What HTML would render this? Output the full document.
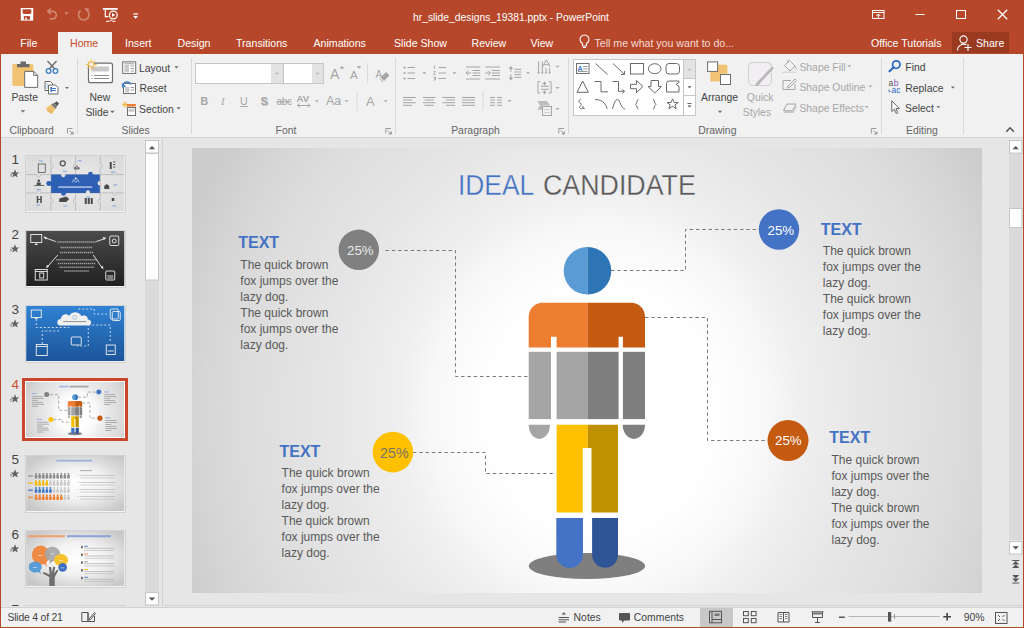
<!DOCTYPE html>
<html><head><meta charset="utf-8"><style>
*{margin:0;padding:0;box-sizing:border-box}
html,body{width:1024px;height:628px;overflow:hidden;background:#E6E6E6;font-family:"Liberation Sans",sans-serif}
.a{position:absolute}
.t{position:absolute;white-space:nowrap;line-height:1}
svg{position:absolute;overflow:visible}
</style></head><body>
<div class="a" style="left:0;top:0;width:1024px;height:54px;background:#B7472A"></div>
<div class="a" style="left:0;top:54px;width:1024px;height:83px;background:#F1F1F1"></div>
<div class="a" style="left:0;top:137px;width:1024px;height:1px;background:#D5D5D5"></div>
<div class="t" style="left:413.0px;top:12.9px;font-size:10.3px;color:#fff;">hr_slide_designs_19381.pptx - PowerPoint</div>
<svg style="left:0;top:0" width="1024" height="54">
<g fill="none" stroke="#fff" stroke-width="1">
<rect x="872.5" y="10.5" width="11.5" height="8"/><path d="M872.5 12.5H884M878.3 18.5V14M876.3 16L878.3 14L880.3 16"/>
<path d="M915.5 14.5H924.5"/>
<rect x="956.5" y="10.5" width="9" height="8"/>
<path d="M997.8 9.8L1007.2 19.2M1007.2 9.8L997.8 19.2" stroke-width="1.3"/>
</g>
<!-- QAT save -->
<rect x="20.8" y="8" width="12.4" height="12.6" fill="#fff"/>
<path d="M22.6 9.2H31.3V12.6A1.3 1.3 0 0 1 30 13.9H23.9A1.3 1.3 0 0 1 22.6 12.6Z" fill="#B7472A"/>
<rect x="23.8" y="16.1" width="6.2" height="3.5" fill="#B7472A"/><rect x="25.2" y="17.6" width="1.6" height="2" fill="#fff"/>
<g fill="none" stroke="#CF8570" stroke-width="1.7">
<path d="M48.5 11.3H52.5A3.8 3.8 0 0 1 52.5 18.9H49.5"/><path d="M50.8 8.6L47.8 11.3L50.8 14"/>
<path d="M85.8 9.8A5.3 5.3 0 1 1 80.5 10.5"/>
</g>
<path d="M84 8.2H88.6V12.8Z" fill="#CF8570"/>
<path d="M64.3 12.2H68.7L66.5 14.9Z" fill="#CF8570"/>
<g fill="none" stroke="#fff" stroke-width="1.2">
<path d="M105.3 9.8V16.7H108.5"/><circle cx="113.3" cy="15" r="3.9"/>
<path d="M106 21.3H109.5L111 19.8L112.5 21.3H115.5" stroke-width="1"/>
</g>
<rect x="102.9" y="8" width="14.7" height="1.8" fill="#fff"/>
<path d="M112 13V17L115.2 15Z" fill="#fff"/>
<rect x="133.2" y="13.4" width="4.8" height="1.2" fill="#fff"/>
<path d="M133.2 16H138L135.6 18.8Z" fill="#fff"/>
</svg>
<div class="a" style="left:58px;top:32px;width:54px;height:22px;background:#F1F1F1"></div>
<div class="t" style="left:20.3px;top:38.0px;font-size:10.6px;color:#fff;">File</div>
<div class="t" style="left:125.0px;top:38.0px;font-size:10.6px;color:#fff;">Insert</div>
<div class="t" style="left:177.5px;top:38.0px;font-size:10.6px;color:#fff;">Design</div>
<div class="t" style="left:236.0px;top:38.0px;font-size:10.6px;color:#fff;">Transitions</div>
<div class="t" style="left:313.5px;top:38.0px;font-size:10.6px;color:#fff;">Animations</div>
<div class="t" style="left:394.0px;top:38.0px;font-size:10.6px;color:#fff;">Slide Show</div>
<div class="t" style="left:471.5px;top:38.0px;font-size:10.6px;color:#fff;">Review</div>
<div class="t" style="left:530.5px;top:38.0px;font-size:10.6px;color:#fff;">View</div>
<div class="t" style="left:871.0px;top:38.0px;font-size:10.6px;color:#fff;">Office Tutorials</div>
<div class="t" style="left:70.0px;top:38.0px;font-size:10.6px;color:#C64A2A;">Home</div>
<div class="t" style="left:594.5px;top:38.0px;font-size:10.6px;color:#F4DCD5;">Tell me what you want to do...</div>
<div class="a" style="left:952px;top:32px;width:57px;height:21px;background:#9A3A21"></div>
<div class="t" style="left:976.0px;top:38.0px;font-size:10.6px;color:#fff;">Share</div>
<svg style="left:0;top:0" width="1024" height="54">
<g fill="none" stroke="#fff" stroke-width="1.1">
<path d="M582.5 43.5A4.5 4.5 0 1 1 586.5 43.5V46H582.5Z"/><path d="M583 47.5H586"/>
<circle cx="963.5" cy="39.5" r="3.6"/><path d="M957.5 50.5A6.2 6.2 0 0 1 966.5 44.8"/>
<path d="M968 44V51M964.5 47.5H971.5"/>
</g></svg>
<div class="t" style="left:9.4px;top:125.5px;font-size:10.4px;color:#666666;">Clipboard</div>
<div class="t" style="left:121.5px;top:125.5px;font-size:10.4px;color:#666666;">Slides</div>
<div class="t" style="left:275.6px;top:125.5px;font-size:10.4px;color:#666666;">Font</div>
<div class="t" style="left:451.2px;top:125.5px;font-size:10.4px;color:#666666;">Paragraph</div>
<div class="t" style="left:698.3px;top:125.5px;font-size:10.4px;color:#666666;">Drawing</div>
<div class="t" style="left:906.0px;top:125.5px;font-size:10.4px;color:#666666;">Editing</div>
<div class="t" style="left:11.4px;top:93.2px;font-size:10.4px;color:#444444;">Paste</div>
<div class="t" style="left:89.4px;top:93.2px;font-size:10.4px;color:#444444;">New</div>
<div class="t" style="left:85.4px;top:108.4px;font-size:10.4px;color:#444444;">Slide</div>
<div class="t" style="left:138.9px;top:63.6px;font-size:10.4px;color:#444444;">Layout</div>
<div class="t" style="left:139.5px;top:84.3px;font-size:10.4px;color:#444444;">Reset</div>
<div class="t" style="left:139.1px;top:105.1px;font-size:10.4px;color:#444444;">Section</div>
<div class="t" style="left:701.0px;top:93.2px;font-size:10.4px;color:#444444;">Arrange</div>
<div class="t" style="left:746.8px;top:93.2px;font-size:10.4px;color:#A8A8A8;">Quick</div>
<div class="t" style="left:742.8px;top:108.4px;font-size:10.4px;color:#A8A8A8;">Styles</div>
<div class="t" style="left:799.4px;top:62.9px;font-size:10.4px;color:#A8A8A8;">Shape Fill</div>
<div class="t" style="left:799.4px;top:83.0px;font-size:10.4px;color:#A8A8A8;">Shape Outline</div>
<div class="t" style="left:799.4px;top:103.7px;font-size:10.4px;color:#A8A8A8;">Shape Effects</div>
<div class="t" style="left:905.3px;top:62.8px;font-size:10.4px;color:#444444;">Find</div>
<div class="t" style="left:905.3px;top:83.5px;font-size:10.4px;color:#444444;">Replace</div>
<div class="t" style="left:905.0px;top:103.9px;font-size:10.4px;color:#444444;">Select</div>
<svg style="left:0;top:0" width="1024" height="140"><rect x="77.0" y="58" width="1" height="76" fill="#DADADA"/><rect x="191.0" y="58" width="1" height="76" fill="#DADADA"/><rect x="395.0" y="58" width="1" height="76" fill="#DADADA"/><rect x="568.0" y="58" width="1" height="76" fill="#DADADA"/><rect x="881.0" y="58" width="1" height="76" fill="#DADADA"/><rect x="963.0" y="58" width="1" height="76" fill="#DADADA"/><g fill="none" stroke="#9A9A9A" stroke-width="1"><path d="M67.5 133.5V128.5H72.5"/><path d="M69.5 130.5L73 134"/></g><path d="M73.5 131V134.5H70Z" fill="#9A9A9A"/><g fill="none" stroke="#9A9A9A" stroke-width="1"><path d="M385.8 133.5V128.5H390.8"/><path d="M387.8 130.5L391.3 134"/></g><path d="M391.8 131V134.5H388.3Z" fill="#9A9A9A"/><g fill="none" stroke="#9A9A9A" stroke-width="1"><path d="M558.8 133.5V128.5H563.8"/><path d="M560.8 130.5L564.3 134"/></g><path d="M564.8 131V134.5H561.3Z" fill="#9A9A9A"/><g fill="none" stroke="#9A9A9A" stroke-width="1"><path d="M871.3 133.5V128.5H876.3"/><path d="M873.3 130.5L876.8 134"/></g><path d="M877.3 131V134.5H873.8Z" fill="#9A9A9A"/><rect x="12.3" y="64" width="21.1" height="22.1" rx="1.5" fill="#F0C271"/><path d="M17 67.2V64H20.5V61.4H26V64H29.4V67.2Z" fill="#6A6A6A"/><path d="M24.7 71.4H33.7L37.7 75.4V87.4H24.7Z" fill="#fff" stroke="#6A6A6A" stroke-width="1"/><path d="M33.7 71.4V75.4H37.7" fill="none" stroke="#6A6A6A" stroke-width="1"/><path d="M20.7 110.2H25.3L23.0 112.50Z" fill="#6E6E6E"/><g fill="none" stroke-width="1.3"><path d="M47.5 61L55 69.2M56.5 61L49 69.2" stroke="#6A6A6A"/><circle cx="48.6" cy="71" r="2.3" stroke="#3F7CC4"/><circle cx="55.4" cy="71" r="2.3" stroke="#3F7CC4"/></g><path d="M45 81.5H50.5L52.5 83.5V90.5H45Z" fill="#fff" stroke="#6A6A6A" stroke-width="1"/><path d="M48.5 85H55.5L58 87.5V94H48.5Z" fill="#fff" stroke="#6A6A6A" stroke-width="1"/><path d="M46.5 84H47.5M46.5 86H47.5M46.5 88H47.5" stroke="#3F7CC4" stroke-width="1"/><path d="M50.5 88.5H56M50.5 90.5H56" stroke="#3F7CC4" stroke-width="1"/><rect x="50.5" y="87" width="1.5" height="5" fill="#3F7CC4"/><path d="M64.9 87H69L66.95 89.05Z" fill="#6E6E6E"/><path d="M45.5 108.5L51 104.5L55.5 109L51.5 114.3Z" fill="#F0C271"/><path d="M47 110.5L50.5 113M48.5 109L52 112" stroke="#D9A650" stroke-width="0.8"/><path d="M51 104.5L53.5 103L57 106.5L55.5 109Z" fill="#7A7A7A"/><path d="M54 103.3L56.8 101.3L59 103.5L57 106.3Z" fill="#555"/><rect x="88.5" y="63.2" width="24" height="19.5" rx="2" fill="#fff" stroke="#6E6E6E" stroke-width="1.2"/><rect x="91.5" y="66.5" width="17.5" height="5" fill="#C9C9C9"/><path d="M94 75.5H109M94 78.5H109" stroke="#8A8A8A" stroke-width="1"/><path d="M91.5 75.5H92.5M91.5 78.5H92.5" stroke="#8A8A8A"/><g stroke="#F2BE55" stroke-width="1"><path d="M91.3 59V70M85.8 64.5H96.8M87.4 60.6L95.2 68.4M95.2 60.6L87.4 68.4"/></g><circle cx="91.3" cy="64.5" r="2.6" fill="#F1F1F1" stroke="#F2BE55" stroke-width="1.1"/><path d="M110 110.7H114.8L112.4 113.10Z" fill="#6E6E6E"/><rect x="122.7" y="61.9" width="13" height="11.5" fill="#fff" stroke="#6E6E6E" stroke-width="1"/><rect x="124.5" y="65" width="4.5" height="7" fill="#C9C9C9"/><path d="M124.5 63.8H134M130.5 66H134M130.5 68.5H134M130.5 71H134" stroke="#9A9A9A" stroke-width="1"/><path d="M174.3 66.3H178.5L176.4 68.40Z" fill="#6E6E6E"/><rect x="123.5" y="83.5" width="12" height="10" fill="#fff" stroke="#6E6E6E" stroke-width="1"/><rect x="125.3" y="87" width="4" height="5.5" fill="#C9C9C9"/><path d="M130.5 87.5H134M130.5 90H134" stroke="#9A9A9A"/><path d="M122.5 86.5A4.5 4.5 0 0 1 131 84.5" fill="none" stroke="#3F7CC4" stroke-width="1.5"/><path d="M121.6 83.3L122.6 88.2L126.2 86.2Z" fill="#3F7CC4"/><g stroke="#F0B84A" stroke-width="1"><path d="M125 101.5V107.5M122 104.5H128M122.9 102.4L127.1 106.6M127.1 102.4L122.9 106.6"/></g><rect x="127" y="104" width="8.8" height="2.5" fill="#ED7D31"/><rect x="127.5" y="107.5" width="8" height="8" fill="#fff" stroke="#6E6E6E" stroke-width="1"/><rect x="128.5" y="108.8" width="6" height="3" fill="#C9C9C9"/><path d="M176.5 107.3H180.7L178.6 109.40Z" fill="#6E6E6E"/><rect x="195.5" y="63.5" width="88" height="20" fill="#fff" stroke="#C6C6C6"/><rect x="271" y="64" width="12" height="19" fill="#E3E3E3"/><rect x="283.5" y="63.5" width="40" height="20" fill="#fff" stroke="#C6C6C6"/><rect x="312" y="64" width="11" height="19" fill="#E3E3E3"/><path d="M275 72.8H279L277.0 74.80Z" fill="#B0B0B0"/><path d="M315.5 72.8H319.5L317.5 74.80Z" fill="#B0B0B0"/><g font-family="Liberation Sans" fill="#A6A6A6"><text x="330" y="79.3" font-size="14">A</text><text x="350" y="79.3" font-size="11.5">A</text><text x="200.5" y="104.9" font-size="10.6" font-weight="bold">B</text><text x="221" y="104.9" font-size="10.6" font-style="italic" font-family="Liberation Serif">I</text><text x="240" y="104.9" font-size="10.6">U</text><text x="261.5" y="105.9" font-size="11" font-weight="bold" fill="#C8C8C8">S</text><text x="260.5" y="104.9" font-size="11" font-weight="bold">S</text><text x="276.5" y="104.9" font-size="10" letter-spacing="-0.3">abc</text><text x="296.5" y="101.5" font-size="9.5" font-weight="bold">AV</text><text x="326" y="104.9" font-size="12.5">Aa</text><text x="366" y="105.6" font-size="13">A</text><text x="375.5" y="78" font-size="10">A</text></g><path d="M339.5 68.5L342 66L344.5 68.5Z" fill="#A6A6A6"/><path d="M356.5 66.3H361.5L359 68.8Z" fill="#A6A6A6"/><rect x="240.2" y="106" width="7.6" height="1" fill="#A6A6A6"/><rect x="276.5" y="101.3" width="14.5" height="1" fill="#A6A6A6"/><path d="M297.5 105.5H310M297.5 105.5L299.5 103.5M297.5 105.5L299.5 107.5M310 105.5L308 103.5M310 105.5L308 107.5" fill="none" stroke="#A6A6A6" stroke-width="1"/><rect x="367" y="63" width="1" height="20" fill="#DADADA"/><rect x="356.5" y="92" width="1" height="19" fill="#DADADA"/><path d="M380.5 77.5L386 72L389.5 75.5L384 81Z" fill="#A6A6A6"/><path d="M379.5 78.5L383 82" stroke="#A6A6A6"/><path d="M314.8 100.3H318.8L316.8 102.30Z" fill="#A6A6A6"/><path d="M344.5 100.3H348.5L346.5 102.30Z" fill="#A6A6A6"/><path d="M383.7 100.3H387.7L385.7 102.30Z" fill="#A6A6A6"/></svg>
<svg style="left:0;top:0" width="1024" height="140"><g stroke="#A6A6A6" stroke-width="1" fill="none"><path d="M407.5 67.5H415M407.5 73H415M407.5 78.5H415"/></g><g fill="#A6A6A6"><circle cx="404.5" cy="67.5" r="1.1"/><circle cx="404.5" cy="73" r="1.1"/><circle cx="404.5" cy="78.5" r="1.1"/></g><g stroke="#A6A6A6" stroke-width="1" fill="none"><path d="M438.5 67.5H446M438.5 73H446M438.5 78.5H446"/><path d="M433.5 66H434.5V69M433.5 71.5H435.5L433.5 74.5H435.5M433.5 77H435.5V80H433.5M434 78.5H435.5" stroke-width="0.8"/><path d="M466 67H480.2M472.5 70.5H480.2M472.5 73H480.2M472.5 75.5H480.2M466 79H480.2M466 73H471M468.3 70.7L466 73L468.3 75.3"/><path d="M485.3 67H500M492 70.5H500M492 73H500M492 75.5H500M485.3 79H500M485.3 73H490.5M488.2 70.7L490.5 73L488.2 75.3"/><path d="M514.4 69.3H521.3M514.4 72H521.3M514.4 74.6H521.3M514.4 77.3H521.3M510.9 68V71.8M510.9 74.3V78.5"/></g><g fill="#A6A6A6"><path d="M508.6 68.8L510.9 66L513.2 68.8Z"/><path d="M508.6 77.6L510.9 80.4L513.2 77.6Z"/></g><g stroke="#A6A6A6" stroke-width="1" fill="none"><path d="M538.6 61.4V73M542.3 61.4V73M546 68.3V73M549.6 68.3V73"/><path d="M542.3 67L546.3 60L550.3 67M543.7 64.7H549"/></g><g fill="#A6A6A6"><path d="M537.3 72.5H539.9L538.6 74.3Z"/><path d="M541 72.5H543.6L542.3 74.3Z"/><path d="M544.7 72.5H547.3L546 74.3Z"/><path d="M548.3 72.5H550.9L549.6 74.3Z"/></g><g stroke="#A6A6A6" stroke-width="1" fill="none"><path d="M540.3 81.7H537.9V93H540.3M548.7 81.7H551.1V93H548.7M540.8 86.3H549M540.8 89.3H549M544.5 84V85.5M544.5 90.5V92"/></g><g fill="#A6A6A6"><path d="M542.3 84.3L544.5 81.3L546.7 84.3Z"/><path d="M542.3 91.6L544.5 94.6L546.7 91.6Z"/></g><g stroke="#A6A6A6" stroke-width="1" fill="none"></g><path d="M537.4 101H547L550 105.5H542V109.8H537.4L540 105.5Z" fill="#BDBDBD"/><rect x="542.5" y="106.5" width="9" height="9" fill="#F1F1F1" stroke="#A6A6A6"/><path d="M544.5 109.5H549.5M544.5 112.5H549.5" stroke="#B5B5B5" stroke-dasharray="1.2,0.8"/><g stroke="#A6A6A6" stroke-width="1" fill="none"><path d="M403 97.5H415.7M403 100H412M403 102.7H415.7M403 105.3H412"/><path d="M422.8 97.5H435.4M424.5 100H433.7M422.8 102.7H435.4M424.5 105.3H433.7"/><path d="M442.5 97.5H455.2M446 100H455.2M442.5 102.7H455.2M446 105.3H455.2"/><path d="M461.9 97.5H475M461.9 100H475M461.9 102.7H475M461.9 105.3H475"/><path d="M490 97.5H495M490 100H495M490 102.7H495M490 105.3H495M497 97.5H502M497 100H502M497 102.7H502M497 105.3H502"/></g><rect x="482.5" y="91.5" width="1" height="19" fill="#DADADA"/><path d="M422.4 72.3H426.4L424.4 74.30Z" fill="#A6A6A6"/><path d="M452.5 72.3H456.5L454.5 74.30Z" fill="#A6A6A6"/><path d="M526 72.3H530L528.0 74.30Z" fill="#A6A6A6"/><path d="M555.5 65.8H559.5L557.5 67.80Z" fill="#A6A6A6"/><path d="M555.5 87H559.5L557.5 89.00Z" fill="#A6A6A6"/><path d="M555.5 108H559.5L557.5 110.00Z" fill="#A6A6A6"/><path d="M507.5 100H511.5L509.5 102.00Z" fill="#A6A6A6"/><rect x="573.5" y="59.5" width="122" height="56" fill="#fff" stroke="#C6C6C6"/><rect x="683.5" y="59.5" width="12" height="19" fill="#E3E3E3" stroke="#C6C6C6"/><rect x="683.5" y="78.5" width="12" height="17" fill="#fff" stroke="#C6C6C6"/><rect x="683.5" y="95.5" width="12" height="20" fill="#fff" stroke="#C6C6C6"/><path d="M687.5 70.5L689.5 68.3L691.5 70.5Z" fill="#BDBDBD"/><path d="M687.5 86.3H691.5L689.5 88.30Z" fill="#555"/><rect x="687.5" y="103" width="4" height="0.9" fill="#555"/><path d="M687.5 105.5H691.5L689.5 107.50Z" fill="#555"/><g fill="none" stroke="#6A6A6A" stroke-width="1"><rect x="576.5" y="63.5" width="12.5" height="10" stroke="#707070"/><path d="M583 66.5H587.5M583 69H587.5M578 71.5H587.5" stroke="#9A9A9A"/><path d="M595.5 63.5L607.5 74.5"/><path d="M613 63.5L624.5 74.5M621 74.5H624.5V71"/><rect x="630.5" y="63.5" width="13" height="10.5"/><ellipse cx="654.7" cy="68.7" rx="6.3" ry="5"/><rect x="666" y="63.5" width="13.5" height="10.5" rx="3"/><path d="M582.7 81L577 92.3H588.4Z"/><path d="M594.5 81.5H601V91.8H608"/><path d="M612.5 81.5H618.5V91.3H624.5M622.3 89.3L624.5 91.3L622.3 93.3"/><path d="M630.5 84.3H636.5V80.5L643 86.5L636.5 92.5V88.7H630.5Z"/><path d="M651 80.5H658.5V86.5H661.5L654.7 93L648 86.5H651Z"/><path d="M666.5 92H679V86.5L676 84.5L679 82.5V81H669A2.5 2.5 0 0 0 666.5 83.5Z"/><path d="M581 99C579 100 578 101.5 580 103C583 104 580 106 579.5 107.5C581 110 584 108 583 106.5C582 108 584 109.5 585 108"/><path d="M595 99.5C600 99.5 606 102 607 109"/><path d="M612.5 109C614 103 615.5 99.5 617.5 99.5C620 99.5 621 109 625 109"/><path d="M638.5 99.5C636.5 99.5 637.5 103.5 635.5 104.3C637.5 105 636.5 109 638.5 109"/><path d="M653 99.5C655 99.5 654 103.5 656 104.3C654 105 655 109 653 109"/><path d="M672.6 98.8L674.2 102.5H678.2L675 104.8L676.3 108.8L672.6 106.3L668.9 108.8L670.2 104.8L667 102.5H671Z"/></g><text x="577.5" y="70.5" font-family="Liberation Sans" font-weight="bold" font-size="7" fill="#3F7CC4">A</text><rect x="713" y="64.7" width="14.4" height="9" fill="#F0C271"/><rect x="710.3" y="72" width="11" height="9.4" fill="#F0C271"/><rect x="707.6" y="61.9" width="10" height="9.5" fill="#fff" stroke="#6E6E6E"/><rect x="720.5" y="74.5" width="10" height="10" fill="#fff" stroke="#6E6E6E"/><path d="M717.8 110.8H722.2L720.0 113.00Z" fill="#6E6E6E"/><rect x="748.5" y="62.5" width="23" height="23" rx="4" fill="#F2EEF4" stroke="#D0D0D0" stroke-width="1"/><path d="M774 68L765 78L762 81L758.5 85.5L755 86L756.5 82.5L760 79L763 76L772 66.5Z" fill="#B9B9B9"/><g fill="none" stroke="#A6A6A6" stroke-width="1"><path d="M784.5 65.5L789.5 60.5L795 66L790 71Z"/><path d="M788 59.5V63"/><path d="M795 66C796 68 796.5 69 795.8 69.5"/><path d="M783 80.5H791M783 80.5V89.5H795V84"/><path d="M788 86L795 79L796.5 80.5L789.5 87.5L787.5 88Z"/><path d="M783.5 110.5L787 104H796L792.5 110.5Z"/></g><rect x="782.5" y="71.5" width="14" height="1.5" fill="#D8D8D8"/><path d="M783.5 110.5L792.5 110.5L796 104L796.5 107.5L793.5 113H784Z" fill="#C8C8C8"/><path d="M847.3 65.3H851.3L849.3 67.30Z" fill="#A6A6A6"/><path d="M868.3 85.5H872.3L870.3 87.50Z" fill="#A6A6A6"/><path d="M864.7 106H868.7L866.7 108.00Z" fill="#A6A6A6"/><circle cx="896.3" cy="64.6" r="3.7" fill="none" stroke="#2E6AC0" stroke-width="1.8"/><path d="M893.5 67.5L889.5 71.3" stroke="#2E6AC0" stroke-width="2.2" stroke-linecap="round"/><text x="888.5" y="86.3" font-family="Liberation Sans" font-size="8.5" fill="#555">a</text><text x="893.8" y="86.3" font-family="Liberation Sans" font-size="8.5" fill="#8E5AB5">b</text><text x="891.5" y="93" font-family="Liberation Sans" font-size="8.5" fill="#2E6AC0">ac</text><path d="M889 89.5V91.5H890.5" fill="none" stroke="#2E6AC0" stroke-width="0.9"/><path d="M891.8 100.8V111.5L894.3 109.3L896.3 113.5L897.8 112.8L895.9 108.6H899.4Z" fill="#fff" stroke="#555" stroke-width="0.9"/><path d="M950.8 86.5H955L952.9 88.60Z" fill="#6E6E6E"/><path d="M936.3 106.3H940.3L938.3 108.30Z" fill="#6E6E6E"/><path d="M1006.3 131.8L1010.1 127.8L1013.9 131.8" fill="none" stroke="#555" stroke-width="1.6"/></svg>
<div class="a" style="left:145px;top:140px;width:14px;height:466px;background:#DADADA"></div>
<svg style="left:0;top:0" width="1024" height="628"><rect x="145.5" y="140.5" width="13" height="12.5" fill="#fff" stroke="#C6C6C6"/><path d="M148.8 149.3L152 146L155.2 149.3Z" fill="#555"/><rect x="145.5" y="153.5" width="13" height="126.5" fill="#fff" stroke="#C6C6C6"/><rect x="145.5" y="592.5" width="13" height="12.5" fill="#fff" stroke="#C6C6C6"/><path d="M148.8 597.5L152 600.8L155.2 597.5Z" fill="#555"/><rect x="162" y="138" width="1" height="468" fill="#D2D2D2"/><rect x="1009" y="138" width="14" height="468" fill="#E6E6E6"/><rect x="1009" y="140" width="13" height="400" fill="#DADADA"/><rect x="1009.5" y="140.5" width="12.5" height="12.5" fill="#fff" stroke="#C6C6C6"/><path d="M1012.5 149.3L1015.7 146L1018.9 149.3Z" fill="#555"/><rect x="1009.5" y="208.5" width="12.5" height="19" fill="#fff" stroke="#C6C6C6"/><rect x="1009.5" y="541.5" width="12.5" height="12.5" fill="#fff" stroke="#C6C6C6"/><path d="M1012.5 546.3L1015.7 549.6L1018.9 546.3Z" fill="#555"/><g fill="#555"><path d="M1012.2 564.5L1015.7 561L1019.2 564.5Z"/><path d="M1012.2 568L1015.7 564.5L1019.2 568Z"/><rect x="1012.2" y="560" width="7" height="1"/><path d="M1012.2 575L1015.7 578.5L1019.2 575Z"/><path d="M1012.2 578.5L1015.7 582L1019.2 578.5Z"/><rect x="1012.2" y="582.5" width="7" height="1"/></g></svg>
<div class="t" style="left:11.5px;top:152.9px;font-size:13.5px;color:#444;">1</div>
<svg style="left:9.5px;top:168.7px" width="10" height="10"><path d="M5 0.3L6.2 3.5H9.3L6.8 5.5L7.7 8.6L5 6.8L2.3 8.6L3.2 5.5L0.7 3.5H3.8Z" fill="#606060"/><path d="M0 5.8L1.8 5.3M0.3 7.3L2 6.6" stroke="#606060" stroke-width="0.7"/></svg>
<div class="t" style="left:11.5px;top:227.9px;font-size:13.5px;color:#444;">2</div>
<svg style="left:9.5px;top:243.7px" width="10" height="10"><path d="M5 0.3L6.2 3.5H9.3L6.8 5.5L7.7 8.6L5 6.8L2.3 8.6L3.2 5.5L0.7 3.5H3.8Z" fill="#606060"/><path d="M0 5.8L1.8 5.3M0.3 7.3L2 6.6" stroke="#606060" stroke-width="0.7"/></svg>
<div class="t" style="left:11.5px;top:302.9px;font-size:13.5px;color:#444;">3</div>
<svg style="left:9.5px;top:318.7px" width="10" height="10"><path d="M5 0.3L6.2 3.5H9.3L6.8 5.5L7.7 8.6L5 6.8L2.3 8.6L3.2 5.5L0.7 3.5H3.8Z" fill="#606060"/><path d="M0 5.8L1.8 5.3M0.3 7.3L2 6.6" stroke="#606060" stroke-width="0.7"/></svg>
<div class="t" style="left:11.5px;top:377.9px;font-size:13.5px;color:#C8502E;">4</div>
<svg style="left:9.5px;top:393.7px" width="10" height="10"><path d="M5 0.3L6.2 3.5H9.3L6.8 5.5L7.7 8.6L5 6.8L2.3 8.6L3.2 5.5L0.7 3.5H3.8Z" fill="#606060"/><path d="M0 5.8L1.8 5.3M0.3 7.3L2 6.6" stroke="#606060" stroke-width="0.7"/></svg>
<div class="t" style="left:11.5px;top:452.9px;font-size:13.5px;color:#444;">5</div>
<svg style="left:9.5px;top:468.7px" width="10" height="10"><path d="M5 0.3L6.2 3.5H9.3L6.8 5.5L7.7 8.6L5 6.8L2.3 8.6L3.2 5.5L0.7 3.5H3.8Z" fill="#606060"/><path d="M0 5.8L1.8 5.3M0.3 7.3L2 6.6" stroke="#606060" stroke-width="0.7"/></svg>
<div class="t" style="left:11.5px;top:527.9px;font-size:13.5px;color:#444;">6</div>
<svg style="left:9.5px;top:543.7px" width="10" height="10"><path d="M5 0.3L6.2 3.5H9.3L6.8 5.5L7.7 8.6L5 6.8L2.3 8.6L3.2 5.5L0.7 3.5H3.8Z" fill="#606060"/><path d="M0 5.8L1.8 5.3M0.3 7.3L2 6.6" stroke="#606060" stroke-width="0.7"/></svg>
<div class="t" style="left:11.5px;top:603.2px;font-size:13.5px;color:#444;">7</div>
<div class="a" style="left:24.5px;top:154.5px;width:101.5px;height:58px;border:1px solid #D2D2D2;background:#F4F4F4"></div>
<svg style="left:26px;top:156.2px" width="98.5" height="55" viewBox="0 0 98 55"><defs><radialGradient id="pz" cx="0.5" cy="0.5" r="0.75"><stop offset="0" stop-color="#EAEAEA"/><stop offset="1" stop-color="#DADADA"/></radialGradient></defs><rect width="98" height="55" fill="url(#pz)"/><g fill="none" stroke="#BDBDBD" stroke-width="1"><path d="M24.6 0V55M49.3 0V55M74 0V55M0 18.6H98M0 36.9H98"/></g><g fill="#E6E6E6" stroke="#BDBDBD" stroke-width="0.9"><path d="M24.6 7.8A2.2 2.2 0 0 1 24.6 12.2"/><path d="M49.3 7.8A2.2 2.2 0 0 0 49.3 12.2"/><path d="M74 7.5A2.2 2.2 0 0 1 74 11.9"/><path d="M10 18.6A2.2 2.2 0 0 0 14.4 18.6"/><path d="M86.3 18.6A2.2 2.2 0 0 1 90.7 18.6"/><path d="M10.3 36.9A2.2 2.2 0 0 1 14.7 36.9"/><path d="M24.6 42.5A2.2 2.2 0 0 1 24.6 46.9"/><path d="M49.3 43A2.2 2.2 0 0 0 49.3 47.4"/><path d="M74 43A2.2 2.2 0 0 0 74 47.4"/><path d="M86 36.9A2.2 2.2 0 0 0 90.4 36.9"/></g><path d="M24.9 18.6H73.6V25A2.3 2.3 0 0 0 73.6 29.6V36.9H24.9V29.8A2.3 2.3 0 0 1 24.9 25.2Z" fill="#2D60B4"/><circle cx="64.2" cy="18.2" r="2.4" fill="#2D60B4"/><circle cx="37.3" cy="37.4" r="2.4" fill="#2D60B4"/><circle cx="22.4" cy="27.5" r="2.4" fill="#2D60B4"/><circle cx="37" cy="19.3" r="2" fill="#E2E2E2"/><circle cx="61.7" cy="36.2" r="2" fill="#E2E2E2"/><rect x="32" y="30.4" width="34" height="1.3" fill="#C8D5EE"/><path d="M46 26.5L47.5 23.5L49 26.5M50 26.5L51.5 23.5L53 26.5" stroke="#C8D5EE" stroke-width="0.7" fill="none"/><circle cx="49.5" cy="22.5" r="1" fill="#fff"/><g fill="none" stroke="#555" stroke-width="0.8"><rect x="12" y="8" width="7" height="8.5"/><circle cx="36.5" cy="7.3" r="2.5" stroke-width="1.3"/><path d="M48 13L50.5 9.5L53 13ZM47.5 12H53.5"/></g><g fill="#4A4A4A"><path d="M83.5 6H85.5V13H83.5Z"/><rect x="87" y="5.5" width="2" height="1"/><rect x="87" y="8" width="2" height="1"/><rect x="87" y="10.5" width="2" height="1"/><circle cx="12.5" cy="24.8" r="1.3"/><path d="M10.5 29V26.5H14.5V29Z"/><rect x="8" y="29" width="10" height="0.8"/><path d="M78 30L80.5 28L83 30V33H78Z"/><path d="M10.5 40H12V47H10.5ZM14 40H15.5V47H14ZM12 43H14V44H12Z"/><path d="M33 42.5L40 40.5L43 43L40 46L33 46Z"/><path d="M58.5 42H60.5V48H58.5ZM61.5 42H63.5V48H61.5ZM64.5 42H66.5V48H64.5Z"/><path d="M85.5 42H88V45H85.5Z"/></g><g fill="#86A6DE"><rect x="12.5" y="4.5" width="4" height="1"/><rect x="36.5" y="14.8" width="4" height="1"/><rect x="51.5" y="4.3" width="4" height="1"/><rect x="84.5" y="15.5" width="4" height="1"/><rect x="10.5" y="33" width="4" height="1"/><rect x="87" y="28.5" width="4" height="1"/><rect x="10" y="48.5" width="4" height="1"/><rect x="37" y="49.5" width="4" height="1"/><rect x="60" y="40.5" width="4" height="1"/><rect x="86" y="49.5" width="4" height="1"/></g></svg>
<div class="a" style="left:24.5px;top:229.5px;width:101.5px;height:58px;border:1px solid #D2D2D2;background:#F4F4F4"></div>
<svg style="left:26px;top:231.2px" width="98.5" height="55" viewBox="0 0 98 55"><defs><linearGradient id="dk" x1="0" y1="0" x2="0" y2="1"><stop offset="0" stop-color="#4B4B4B"/><stop offset="1" stop-color="#202020"/></linearGradient></defs><rect width="98" height="55" fill="url(#dk)"/><g fill="none" stroke="#EDEDED" stroke-width="0.9"><rect x="4.5" y="3.5" width="11" height="8"/><path d="M8.5 13.5H11.5M10 11.5V13.5"/><rect x="83.5" y="5" width="9" height="9.5" rx="1"/><circle cx="88" cy="10" r="2"/><rect x="9" y="38.5" width="12" height="10.5"/><path d="M9 40.5H21"/><rect x="13.5" y="42" width="4" height="5"/><rect x="79.5" y="40" width="9" height="9" rx="1"/><path d="M81 45H87M81 47H87"/><path d="M29.5 10.5L18 6.5M70 10.5L79 7.5M31.5 24L21 36M67 24L76 37"/></g><g fill="#EDEDED"><path d="M17 5.5L20.5 6L19.5 8.5Z"/><path d="M80 6.8L76.5 6L77.5 9Z"/><path d="M20 37.5L20.5 34L23 35Z"/><path d="M77 38.5L74.5 36L76.8 35Z"/></g><g stroke="#C8C8C8" stroke-width="1.5" stroke-dasharray="1.3,0.7" opacity="0.75"><path d="M31 11H69.7M34.3 16.4H66.5M33.7 21.4H67M30 28.7H70.8M31.6 32.5H69.2M33.2 36.3H68M38 40H62.7"/></g></svg>
<div class="a" style="left:24.5px;top:304.5px;width:101.5px;height:58px;border:1px solid #D2D2D2;background:#F4F4F4"></div>
<svg style="left:26px;top:306.2px" width="98.5" height="55" viewBox="0 0 98 55"><defs><linearGradient id="bl" x1="0" y1="0" x2="0" y2="1"><stop offset="0" stop-color="#2F82D4"/><stop offset="1" stop-color="#1C5499"/></linearGradient></defs><rect width="98" height="55" fill="url(#bl)"/><path d="M34 19.5C30 19.5 30 13 34.5 13C35 8 41 7 43 10C45 5 53 5 55 10C58 8.5 62 10 61.5 13.5C66 13.5 66 19.5 62 19.5Z" fill="#F0F0F0"/><rect x="37" y="15" width="23" height="1.1" fill="#9A9A9A"/><circle cx="48.5" cy="11.5" r="2" fill="none" stroke="#8AA8D0" stroke-width="0.6"/><g fill="none" stroke="#F0F0F0" stroke-width="0.9"><rect x="5" y="4" width="10" height="7.5"/><path d="M8.5 12.5H11.5"/><rect x="84" y="3" width="8" height="10" rx="1"/><rect x="86" y="5.5" width="8" height="9" rx="1"/><rect x="10" y="38.5" width="11" height="11"/><path d="M10 40.5H21"/><rect x="45" y="31" width="10" height="8" rx="1"/><rect x="80" y="39" width="9" height="9.5"/><path d="M81.5 45H87.5"/></g><g fill="none" stroke="#F0F0F0" stroke-width="0.8" stroke-dasharray="2,2"><path d="M10 13V21.5H43"/><path d="M16 38V25H35"/><path d="M62 19H84V37"/><path d="M52 3H68V8H82"/><path d="M62 22V40H51"/></g></svg>
<svg style="left:0;top:0" width="1024" height="628"><rect x="192" y="148" width="790" height="445" fill="#D6D6D6"/><defs><radialGradient id="sbg" gradientUnits="userSpaceOnUse" cx="0" cy="0" r="1" gradientTransform="translate(600 410) scale(440 480)"><stop offset="0" stop-color="#FFFFFF"/><stop offset="0.25" stop-color="#FFFFFF"/><stop offset="0.38" stop-color="#F8F8F8"/><stop offset="0.46" stop-color="#EFEFEF"/><stop offset="0.61" stop-color="#E6E6E6"/><stop offset="0.8" stop-color="#DDDDDD"/><stop offset="0.9" stop-color="#D6D6D6"/><stop offset="1" stop-color="#CDCDCD"/></radialGradient></defs><rect x="192" y="148" width="790" height="445" fill="url(#sbg)"/><g fill="none" stroke="#7a7a7a" stroke-width="1" stroke-dasharray="3.4,2.9">
<path d="M385.5 250.5H455.5V376.5H528"/>
<path d="M611 270.5H685.5V229.5H758"/>
<path d="M645 317.5H707.5V440.5H767"/>
<path d="M413 452.5H485.5V473.5H556"/>
</g>
<circle cx="358.8" cy="249.8" r="20.2" fill="#808080"/>
<circle cx="779" cy="229.5" r="20.2" fill="#4472C4"/>
<circle cx="788" cy="440.5" r="20.5" fill="#C55A11"/>
<circle cx="392.9" cy="452.1" r="20.3" fill="#FFC000"/>
<ellipse cx="586.9" cy="566" rx="58.2" ry="13" fill="#7F7F7F"/>
<path d="M587.5 247A23.8 23.8 0 0 0 587.5 294.6Z" fill="#5B9BD5"/>
<path d="M587.5 247A23.8 23.8 0 0 1 587.5 294.6Z" fill="#2E75B6"/>
<path d="M528.7 347.4V316.7A14 14 0 0 1 542.7 302.7H587.8V347.4H556.6V336.8H551V347.4Z" fill="#ED7D31"/>
<path d="M587.8 302.7H631A14 14 0 0 1 645 316.7V347.4H622.9V336.8H618.6V347.4H587.8Z" fill="#C55A11"/>
<rect x="528.7" y="351.8" width="22.3" height="67.3" fill="#A5A5A5"/>
<rect x="556.6" y="351.8" width="31.2" height="67.3" fill="#A5A5A5"/>
<rect x="587.8" y="351.8" width="30.8" height="67.3" fill="#7F7F7F"/>
<rect x="622.9" y="351.8" width="22.1" height="67.3" fill="#7F7F7F"/>
<path d="M528.7 424.8H550A10.65 14.1 0 0 1 528.7 424.8Z" fill="#A5A5A5"/>
<path d="M622.7 424.8H645A11.15 14.1 0 0 1 622.7 424.8Z" fill="#7F7F7F"/>
<path d="M556.6 424.8H587.8V448H582.8V512.4H556.6Z" fill="#FFC000"/>
<path d="M587.8 424.8H618V512.4H591.5V448H587.8Z" fill="#BF9000"/>
<path d="M556.3 518.1H583V554.5A13.35 13.35 0 0 1 556.3 554.5Z" fill="#4472C4"/>
<path d="M592.1 518.1H618V554.8A12.95 12.95 0 0 1 592.1 554.8Z" fill="#2F5597"/>
</svg>
<div class="t" style="left:457.8px;top:169.6px;font-size:29.5px;color:#4472C4;transform:scaleX(0.894);transform-origin:0 0;-webkit-text-stroke:0.3px #EAEAEA">IDEAL</div>
<div class="t" style="left:542.5px;top:169.6px;font-size:29.5px;color:#595959;transform:scaleX(0.908);transform-origin:0 0;-webkit-text-stroke:0.3px #EDEDED">CANDIDATE</div>
<div class="t" style="left:347.0px;top:244.2px;font-size:13.3px;color:#E8E8E8;">25%</div>
<div class="t" style="left:767.5px;top:223.6px;font-size:13.3px;color:#FFFFFF;">25%</div>
<div class="t" style="left:775.0px;top:434.2px;font-size:13.3px;color:#FFFFFF;">25%</div>
<div class="t" style="left:380.0px;top:445.8px;font-size:14.3px;color:#7A7465;">25%</div>
<div class="t" style="left:238.2px;top:234.8px;font-size:16px;color:#4472C4;font-weight:bold;">TEXT</div>
<div class="a" style="left:240.3px;top:256.6px;font-size:12px;line-height:16px;color:#595959;white-space:nowrap">The quick brown<br>fox jumps over the<br>lazy dog.<br>The quick brown<br>fox jumps over the<br>lazy dog.</div>
<div class="t" style="left:820.7px;top:222.2px;font-size:16px;color:#4472C4;font-weight:bold;">TEXT</div>
<div class="a" style="left:822.8px;top:243.3px;font-size:12px;line-height:16px;color:#595959;white-space:nowrap">The quick brown<br>fox jumps over the<br>lazy dog.<br>The quick brown<br>fox jumps over the<br>lazy dog.</div>
<div class="t" style="left:829.3px;top:430.4px;font-size:16px;color:#4472C4;font-weight:bold;">TEXT</div>
<div class="a" style="left:831.5px;top:452.3px;font-size:12px;line-height:16px;color:#595959;white-space:nowrap">The quick brown<br>fox jumps over the<br>lazy dog.<br>The quick brown<br>fox jumps over the<br>lazy dog.</div>
<div class="t" style="left:279.5px;top:444.3px;font-size:16px;color:#4472C4;font-weight:bold;">TEXT</div>
<div class="a" style="left:281.6px;top:465.2px;font-size:12px;line-height:16px;color:#595959;white-space:nowrap">The quick brown<br>fox jumps over the<br>lazy dog.<br>The quick brown<br>fox jumps over the<br>lazy dog.</div>
<div class="a" style="left:22px;top:378px;width:106px;height:63px;border:3px solid #C9462C;background:#fff"></div>
<svg style="left:26px;top:382px" width="98" height="55" viewBox="192 148 790 445" preserveAspectRatio="none"><defs><radialGradient id="sbg4" gradientUnits="userSpaceOnUse" cx="0" cy="0" r="1" gradientTransform="translate(600 410) scale(440 480)"><stop offset="0" stop-color="#FFFFFF"/><stop offset="0.25" stop-color="#FFFFFF"/><stop offset="0.38" stop-color="#F8F8F8"/><stop offset="0.46" stop-color="#EFEFEF"/><stop offset="0.61" stop-color="#E6E6E6"/><stop offset="0.8" stop-color="#DDDDDD"/><stop offset="0.9" stop-color="#D6D6D6"/><stop offset="1" stop-color="#CDCDCD"/></radialGradient></defs><rect x="192" y="148" width="790" height="445" fill="url(#sbg4)"/><g fill="none" stroke="#7a7a7a" stroke-width="5" stroke-dasharray="24,16">
<path d="M385.5 250.5H455.5V376.5H528"/>
<path d="M611 270.5H685.5V229.5H758"/>
<path d="M645 317.5H707.5V440.5H767"/>
<path d="M413 452.5H485.5V473.5H556"/>
</g>
<circle cx="358.8" cy="249.8" r="20.2" fill="#808080"/>
<circle cx="779" cy="229.5" r="20.2" fill="#4472C4"/>
<circle cx="788" cy="440.5" r="20.5" fill="#C55A11"/>
<circle cx="392.9" cy="452.1" r="20.3" fill="#FFC000"/>
<ellipse cx="586.9" cy="566" rx="58.2" ry="13" fill="#7F7F7F"/>
<path d="M587.5 247A23.8 23.8 0 0 0 587.5 294.6Z" fill="#5B9BD5"/>
<path d="M587.5 247A23.8 23.8 0 0 1 587.5 294.6Z" fill="#2E75B6"/>
<path d="M528.7 347.4V316.7A14 14 0 0 1 542.7 302.7H587.8V347.4H556.6V336.8H551V347.4Z" fill="#ED7D31"/>
<path d="M587.8 302.7H631A14 14 0 0 1 645 316.7V347.4H622.9V336.8H618.6V347.4H587.8Z" fill="#C55A11"/>
<rect x="528.7" y="351.8" width="22.3" height="67.3" fill="#A5A5A5"/>
<rect x="556.6" y="351.8" width="31.2" height="67.3" fill="#A5A5A5"/>
<rect x="587.8" y="351.8" width="30.8" height="67.3" fill="#7F7F7F"/>
<rect x="622.9" y="351.8" width="22.1" height="67.3" fill="#7F7F7F"/>
<path d="M528.7 424.8H550A10.65 14.1 0 0 1 528.7 424.8Z" fill="#A5A5A5"/>
<path d="M622.7 424.8H645A11.15 14.1 0 0 1 622.7 424.8Z" fill="#7F7F7F"/>
<path d="M556.6 424.8H587.8V448H582.8V512.4H556.6Z" fill="#FFC000"/>
<path d="M587.8 424.8H618V512.4H591.5V448H587.8Z" fill="#BF9000"/>
<path d="M556.3 518.1H583V554.5A13.35 13.35 0 0 1 556.3 554.5Z" fill="#4472C4"/>
<path d="M592.1 518.1H618V554.8A12.95 12.95 0 0 1 592.1 554.8Z" fill="#2F5597"/>
<rect x="459" y="178" width="75" height="14" fill="#A9BDE4"/><rect x="543" y="178" width="152" height="14" fill="#A5A5A5"/><rect x="238" y="237" width="41" height="9" fill="#9DB3E0"/><rect x="240" y="261" width="88" height="6" fill="#9A9A9A"/><rect x="240" y="277" width="97" height="6" fill="#9A9A9A"/><rect x="240" y="293" width="50" height="6" fill="#9A9A9A"/><rect x="240" y="309" width="88" height="6" fill="#9A9A9A"/><rect x="240" y="325" width="97" height="6" fill="#9A9A9A"/><rect x="240" y="341" width="50" height="6" fill="#9A9A9A"/><rect x="821" y="224" width="41" height="9" fill="#9DB3E0"/><rect x="823" y="248" width="88" height="6" fill="#9A9A9A"/><rect x="823" y="264" width="97" height="6" fill="#9A9A9A"/><rect x="823" y="280" width="50" height="6" fill="#9A9A9A"/><rect x="823" y="296" width="88" height="6" fill="#9A9A9A"/><rect x="823" y="312" width="97" height="6" fill="#9A9A9A"/><rect x="823" y="328" width="50" height="6" fill="#9A9A9A"/><rect x="829" y="433" width="41" height="9" fill="#9DB3E0"/><rect x="831" y="457" width="88" height="6" fill="#9A9A9A"/><rect x="831" y="473" width="97" height="6" fill="#9A9A9A"/><rect x="831" y="489" width="50" height="6" fill="#9A9A9A"/><rect x="831" y="505" width="88" height="6" fill="#9A9A9A"/><rect x="831" y="521" width="97" height="6" fill="#9A9A9A"/><rect x="831" y="537" width="50" height="6" fill="#9A9A9A"/><rect x="279" y="446" width="41" height="9" fill="#9DB3E0"/><rect x="281" y="470" width="88" height="6" fill="#9A9A9A"/><rect x="281" y="486" width="97" height="6" fill="#9A9A9A"/><rect x="281" y="502" width="50" height="6" fill="#9A9A9A"/><rect x="281" y="518" width="88" height="6" fill="#9A9A9A"/><rect x="281" y="534" width="97" height="6" fill="#9A9A9A"/><rect x="281" y="550" width="50" height="6" fill="#9A9A9A"/></svg>
<div class="a" style="left:24.5px;top:454.5px;width:101.5px;height:58px;border:1px solid #D2D2D2;background:#F4F4F4"></div>
<svg style="left:26px;top:456.2px" width="98.5" height="55" viewBox="0 0 98 55"><defs><radialGradient id="g5" cx="0.52" cy="0.5" r="0.62"><stop offset="0" stop-color="#fff"/><stop offset="0.45" stop-color="#F2F2F2"/><stop offset="1" stop-color="#C9C9C9"/></radialGradient></defs><rect width="98" height="55" fill="url(#g5)"/><rect x="30" y="3.8" width="36" height="1.8" fill="#9FB2DE"/><rect x="2" y="19.3" width="4.5" height="1.6" fill="#8C8C8C" opacity="0.8"/><circle cx="9.8" cy="17.900000000000002" r="1" fill="#8C8C8C"/><rect x="8.5" y="19.0" width="2.6" height="3.6" rx="0.6" fill="#8C8C8C"/><circle cx="13.4" cy="17.900000000000002" r="1" fill="#8C8C8C"/><rect x="12.1" y="19.0" width="2.6" height="3.6" rx="0.6" fill="#8C8C8C"/><circle cx="17.0" cy="17.900000000000002" r="1" fill="#8C8C8C"/><rect x="15.7" y="19.0" width="2.6" height="3.6" rx="0.6" fill="#8C8C8C"/><circle cx="20.6" cy="17.900000000000002" r="1" fill="#8C8C8C"/><rect x="19.3" y="19.0" width="2.6" height="3.6" rx="0.6" fill="#8C8C8C"/><circle cx="24.200000000000003" cy="17.900000000000002" r="1" fill="#8C8C8C"/><rect x="22.900000000000002" y="19.0" width="2.6" height="3.6" rx="0.6" fill="#8C8C8C"/><circle cx="27.8" cy="17.900000000000002" r="1" fill="#8C8C8C"/><rect x="26.5" y="19.0" width="2.6" height="3.6" rx="0.6" fill="#8C8C8C"/><circle cx="31.400000000000002" cy="17.900000000000002" r="1" fill="#8C8C8C"/><rect x="30.1" y="19.0" width="2.6" height="3.6" rx="0.6" fill="#8C8C8C"/><circle cx="35.0" cy="17.900000000000002" r="1" fill="#8C8C8C"/><rect x="33.7" y="19.0" width="2.6" height="3.6" rx="0.6" fill="#8C8C8C"/><circle cx="38.6" cy="17.900000000000002" r="1" fill="#8C8C8C"/><rect x="37.300000000000004" y="19.0" width="2.6" height="3.6" rx="0.6" fill="#8C8C8C"/><circle cx="42.2" cy="17.900000000000002" r="1" fill="#8C8C8C"/><rect x="40.900000000000006" y="19.0" width="2.6" height="3.6" rx="0.6" fill="#8C8C8C"/><rect x="2" y="26.4" width="4.5" height="1.6" fill="#F5B800" opacity="0.8"/><circle cx="9.8" cy="25.0" r="1" fill="#F5B800"/><rect x="8.5" y="26.099999999999998" width="2.6" height="3.6" rx="0.6" fill="#F5B800"/><circle cx="13.4" cy="25.0" r="1" fill="#F5B800"/><rect x="12.1" y="26.099999999999998" width="2.6" height="3.6" rx="0.6" fill="#F5B800"/><circle cx="17.0" cy="25.0" r="1" fill="#F5B800"/><rect x="15.7" y="26.099999999999998" width="2.6" height="3.6" rx="0.6" fill="#F5B800"/><circle cx="20.6" cy="25.0" r="1" fill="#F5B800"/><rect x="19.3" y="26.099999999999998" width="2.6" height="3.6" rx="0.6" fill="#F5B800"/><circle cx="24.200000000000003" cy="25.0" r="1" fill="#C9C9C9"/><rect x="22.900000000000002" y="26.099999999999998" width="2.6" height="3.6" rx="0.6" fill="#C9C9C9"/><circle cx="27.8" cy="25.0" r="1" fill="#C9C9C9"/><rect x="26.5" y="26.099999999999998" width="2.6" height="3.6" rx="0.6" fill="#C9C9C9"/><circle cx="31.400000000000002" cy="25.0" r="1" fill="#C9C9C9"/><rect x="30.1" y="26.099999999999998" width="2.6" height="3.6" rx="0.6" fill="#C9C9C9"/><circle cx="35.0" cy="25.0" r="1" fill="#C9C9C9"/><rect x="33.7" y="26.099999999999998" width="2.6" height="3.6" rx="0.6" fill="#C9C9C9"/><circle cx="38.6" cy="25.0" r="1" fill="#C9C9C9"/><rect x="37.300000000000004" y="26.099999999999998" width="2.6" height="3.6" rx="0.6" fill="#C9C9C9"/><circle cx="42.2" cy="25.0" r="1" fill="#C9C9C9"/><rect x="40.900000000000006" y="26.099999999999998" width="2.6" height="3.6" rx="0.6" fill="#C9C9C9"/><rect x="2" y="33.5" width="4.5" height="1.6" fill="#3F75C8" opacity="0.8"/><circle cx="9.8" cy="32.1" r="1" fill="#3F75C8"/><rect x="8.5" y="33.2" width="2.6" height="3.6" rx="0.6" fill="#3F75C8"/><circle cx="13.4" cy="32.1" r="1" fill="#3F75C8"/><rect x="12.1" y="33.2" width="2.6" height="3.6" rx="0.6" fill="#3F75C8"/><circle cx="17.0" cy="32.1" r="1" fill="#3F75C8"/><rect x="15.7" y="33.2" width="2.6" height="3.6" rx="0.6" fill="#3F75C8"/><circle cx="20.6" cy="32.1" r="1" fill="#3F75C8"/><rect x="19.3" y="33.2" width="2.6" height="3.6" rx="0.6" fill="#3F75C8"/><circle cx="24.200000000000003" cy="32.1" r="1" fill="#3F75C8"/><rect x="22.900000000000002" y="33.2" width="2.6" height="3.6" rx="0.6" fill="#3F75C8"/><circle cx="27.8" cy="32.1" r="1" fill="#C9C9C9"/><rect x="26.5" y="33.2" width="2.6" height="3.6" rx="0.6" fill="#C9C9C9"/><circle cx="31.400000000000002" cy="32.1" r="1" fill="#C9C9C9"/><rect x="30.1" y="33.2" width="2.6" height="3.6" rx="0.6" fill="#C9C9C9"/><circle cx="35.0" cy="32.1" r="1" fill="#C9C9C9"/><rect x="33.7" y="33.2" width="2.6" height="3.6" rx="0.6" fill="#C9C9C9"/><circle cx="38.6" cy="32.1" r="1" fill="#C9C9C9"/><rect x="37.300000000000004" y="33.2" width="2.6" height="3.6" rx="0.6" fill="#C9C9C9"/><circle cx="42.2" cy="32.1" r="1" fill="#C9C9C9"/><rect x="40.900000000000006" y="33.2" width="2.6" height="3.6" rx="0.6" fill="#C9C9C9"/><rect x="2" y="40.599999999999994" width="4.5" height="1.6" fill="#EE7F2E" opacity="0.8"/><circle cx="9.8" cy="39.199999999999996" r="1" fill="#EE7F2E"/><rect x="8.5" y="40.3" width="2.6" height="3.6" rx="0.6" fill="#EE7F2E"/><circle cx="13.4" cy="39.199999999999996" r="1" fill="#EE7F2E"/><rect x="12.1" y="40.3" width="2.6" height="3.6" rx="0.6" fill="#EE7F2E"/><circle cx="17.0" cy="39.199999999999996" r="1" fill="#EE7F2E"/><rect x="15.7" y="40.3" width="2.6" height="3.6" rx="0.6" fill="#EE7F2E"/><circle cx="20.6" cy="39.199999999999996" r="1" fill="#EE7F2E"/><rect x="19.3" y="40.3" width="2.6" height="3.6" rx="0.6" fill="#EE7F2E"/><circle cx="24.200000000000003" cy="39.199999999999996" r="1" fill="#EE7F2E"/><rect x="22.900000000000002" y="40.3" width="2.6" height="3.6" rx="0.6" fill="#EE7F2E"/><circle cx="27.8" cy="39.199999999999996" r="1" fill="#EE7F2E"/><rect x="26.5" y="40.3" width="2.6" height="3.6" rx="0.6" fill="#EE7F2E"/><circle cx="31.400000000000002" cy="39.199999999999996" r="1" fill="#EE7F2E"/><rect x="30.1" y="40.3" width="2.6" height="3.6" rx="0.6" fill="#EE7F2E"/><circle cx="35.0" cy="39.199999999999996" r="1" fill="#EE7F2E"/><rect x="33.7" y="40.3" width="2.6" height="3.6" rx="0.6" fill="#EE7F2E"/><circle cx="38.6" cy="39.199999999999996" r="1" fill="#C9C9C9"/><rect x="37.300000000000004" y="40.3" width="2.6" height="3.6" rx="0.6" fill="#C9C9C9"/><circle cx="42.2" cy="39.199999999999996" r="1" fill="#C9C9C9"/><rect x="40.900000000000006" y="40.3" width="2.6" height="3.6" rx="0.6" fill="#C9C9C9"/><rect x="53.6" y="14.2" width="12" height="0.9" fill="#A0A0A0"/><rect x="51.5" y="18.9" width="0.9" height="0.9" fill="#AAA"/><rect x="54" y="19.2" width="35" height="0.7" fill="#B8B8B8"/><rect x="54" y="21.599999999999998" width="35" height="0.7" fill="#C0C0C0"/><rect x="51.5" y="25.95" width="0.9" height="0.9" fill="#AAA"/><rect x="54" y="26.25" width="35" height="0.7" fill="#B8B8B8"/><rect x="54" y="28.65" width="35" height="0.7" fill="#C0C0C0"/><rect x="51.5" y="33.0" width="0.9" height="0.9" fill="#AAA"/><rect x="54" y="33.3" width="35" height="0.7" fill="#B8B8B8"/><rect x="54" y="35.699999999999996" width="35" height="0.7" fill="#C0C0C0"/><rect x="51.5" y="40.05" width="0.9" height="0.9" fill="#AAA"/><rect x="54" y="40.349999999999994" width="35" height="0.7" fill="#B8B8B8"/><rect x="54" y="42.74999999999999" width="35" height="0.7" fill="#C0C0C0"/></svg>
<div class="a" style="left:24.5px;top:529.5px;width:101.5px;height:58px;border:1px solid #D2D2D2;background:#F4F4F4"></div>
<svg style="left:26px;top:531.2px" width="98.5" height="55" viewBox="0 0 98 55"><defs><radialGradient id="g6" cx="0.52" cy="0.5" r="0.62"><stop offset="0" stop-color="#fff"/><stop offset="0.45" stop-color="#F2F2F2"/><stop offset="1" stop-color="#C9C9C9"/></radialGradient></defs><rect width="98" height="55" fill="url(#g6)"/><rect x="1.5" y="4.2" width="37" height="2" fill="#F0A070"/><rect x="40.7" y="4.2" width="44" height="2" fill="#8AA3D8"/><path d="M23 55V46L16.5 42.5L17.5 41L23.5 43.5L22.5 36H25L25.5 42L27 35.5L29 36L27.8 42.5L31 38.5L32.2 39.5L28.5 46V55Z" fill="#6E6E6E"/><ellipse cx="14.4" cy="24.1" rx="8.8" ry="9.6" fill="#EF8A45"/><path d="M17 32L21 36L19.5 31Z" fill="#EF8A45"/><ellipse cx="26.2" cy="23" rx="7.8" ry="7.3" fill="#A5A5A5" opacity="0.9"/><path d="M24 29L23 33L27 29.5Z" fill="#A5A5A5"/><ellipse cx="34.8" cy="28.9" rx="7" ry="6" fill="#F8C22C"/><ellipse cx="9" cy="36" rx="6.5" ry="5.5" fill="#5B9BD5"/><path d="M11.5 40.5L15 43L13.5 39.5Z" fill="#5B9BD5"/><circle cx="36.4" cy="36.4" r="4.3" fill="#3F6FC0"/><g fill="#fff" opacity="0.7"><rect x="12" y="24" width="3.5" height="0.8"/><rect x="24.5" y="22.5" width="3.5" height="0.8"/><rect x="33" y="29" width="3.5" height="0.8"/><rect x="7" y="36" width="3.5" height="0.8"/><rect x="34.5" y="36.5" width="3.5" height="0.8"/></g><rect x="54.7" y="14.8" width="2" height="2.5" fill="#777"/><rect x="58" y="14.8" width="3.7" height="1" fill="#5A7FC8"/><rect x="58" y="16.900000000000002" width="30" height="0.7" fill="#B0B0B0"/><rect x="58" y="19.1" width="30" height="0.7" fill="#BBBBBB"/><rect x="54.7" y="22.55" width="2" height="2.5" fill="#777"/><rect x="58" y="22.55" width="3.7" height="1" fill="#EE8A4A"/><rect x="58" y="24.650000000000002" width="30" height="0.7" fill="#B0B0B0"/><rect x="58" y="26.85" width="30" height="0.7" fill="#BBBBBB"/><rect x="54.7" y="30.3" width="2" height="2.5" fill="#777"/><rect x="58" y="30.3" width="3.7" height="1" fill="#999"/><rect x="58" y="32.4" width="30" height="0.7" fill="#B0B0B0"/><rect x="58" y="34.6" width="30" height="0.7" fill="#BBBBBB"/><rect x="54.7" y="38.05" width="2" height="2.5" fill="#777"/><rect x="58" y="38.05" width="3.7" height="1" fill="#F5B800"/><rect x="58" y="40.15" width="30" height="0.7" fill="#B0B0B0"/><rect x="58" y="42.349999999999994" width="30" height="0.7" fill="#BBBBBB"/><rect x="54.7" y="45.8" width="2" height="2.5" fill="#777"/><rect x="58" y="45.8" width="3.7" height="1" fill="#5A7FC8"/><rect x="58" y="47.9" width="30" height="0.7" fill="#B0B0B0"/><rect x="58" y="50.099999999999994" width="30" height="0.7" fill="#BBBBBB"/></svg>
<div class="a" style="left:24.5px;top:604.5px;width:101.5px;height:3px;border:1px solid #D2D2D2;background:#E0E0E0"></div>
<div class="a" style="left:165px;top:605px;width:857px;height:1px;background:#D2D2D2"></div>
<div class="a" style="left:0;top:606px;width:1024px;height:1px;background:#E6E6E6"></div>
<div class="a" style="left:0;top:607px;width:1024px;height:1px;background:#D2D2D2"></div>
<div class="a" style="left:0;top:608px;width:1024px;height:19px;background:#F1F1F1"></div>
<div class="a" style="left:699.5px;top:608px;width:33.5px;height:19px;background:#C8C8C8"></div>
<div class="t" style="left:7.5px;top:612.5px;font-size:10.4px;color:#444;letter-spacing:-0.2px;">Slide 4 of 21</div>
<div class="t" style="left:573.6px;top:612.7px;font-size:10.4px;color:#444;">Notes</div>
<div class="t" style="left:633.8px;top:612.7px;font-size:10.4px;color:#444;">Comments</div>
<div class="t" style="left:963.8px;top:612.7px;font-size:10.4px;color:#444;">90%</div>
<svg style="left:0;top:0" width="1024" height="628"><g fill="none" stroke="#555" stroke-width="1"><path d="M81.8 612.5V621.5H88V612.5ZM88 612.5V621.5H94.5V616"/><path d="M89.5 618.5L94.5 612.5L95.5 613.5L90.5 619.5L89 620Z"/><path d="M558.6 617.5H569M558.6 619.8H569M558.6 622H566"/><path d="M561.5 614.5L563.8 612.3L566.1 614.5Z" fill="#555" stroke="none"/><rect x="709.5" y="611.3" width="12" height="11.5"/><path d="M712 611.3V622.8M712 619.5H721.5"/><rect x="714.5" y="613.5" width="5" height="2.5" fill="#777" stroke="none"/><rect x="743.5" y="611.5" width="4.8" height="4.2"/><rect x="751.3" y="611.5" width="4.8" height="4.2"/><rect x="743.5" y="618.5" width="4.8" height="4.2"/><rect x="751.3" y="618.5" width="4.8" height="4.2"/><path d="M778 612.5H783.5V622H778ZM783.5 612.5H789V622H783.5Z"/><path d="M779.5 614.5H782M779.5 616.5H782M779.5 618.5H782M785 614.5H787.5M785 616.5H787.5M785 618.5H787.5" stroke-width="0.7"/><path d="M811.5 611.8H823.5M812.5 612V617.5H822.5V612M817.5 617.5V622.5M815 622.5H820"/><rect x="995.5" y="612.5" width="11.5" height="11"/></g><rect x="812.5" y="612.5" width="10" height="2" fill="#777"/><path d="M998 615L1000 617M1004.5 615L1002.5 617M998 621L1000 619M1004.5 621L1002.5 619" stroke="#555" stroke-width="1"/><path d="M627 613H620Q619 613 619 614V619.5Q619 620.5 620 620.5H622V623L624.5 620.5H629Q630 620.5 630 619.5V614Q630 613 629 613Z" fill="#555"/><rect x="839" y="616.5" width="5.8" height="1.5" fill="#555"/><rect x="848.5" y="616" width="91" height="1" fill="#B5B5B5"/><rect x="888" y="612" width="3.2" height="9.6" fill="#555"/><rect x="894" y="614" width="1" height="5" fill="#999"/><path d="M943.3 616.8H951M947.15 613V620.6" stroke="#444" stroke-width="1.6"/></svg>
<div class="a" style="left:0;top:54px;width:1px;height:574px;background:#B7472A"></div>
<div class="a" style="left:1023px;top:54px;width:1px;height:574px;background:#B7472A"></div>
<div class="a" style="left:0;top:627px;width:1024px;height:1px;background:#B7472A"></div>
</body></html>
